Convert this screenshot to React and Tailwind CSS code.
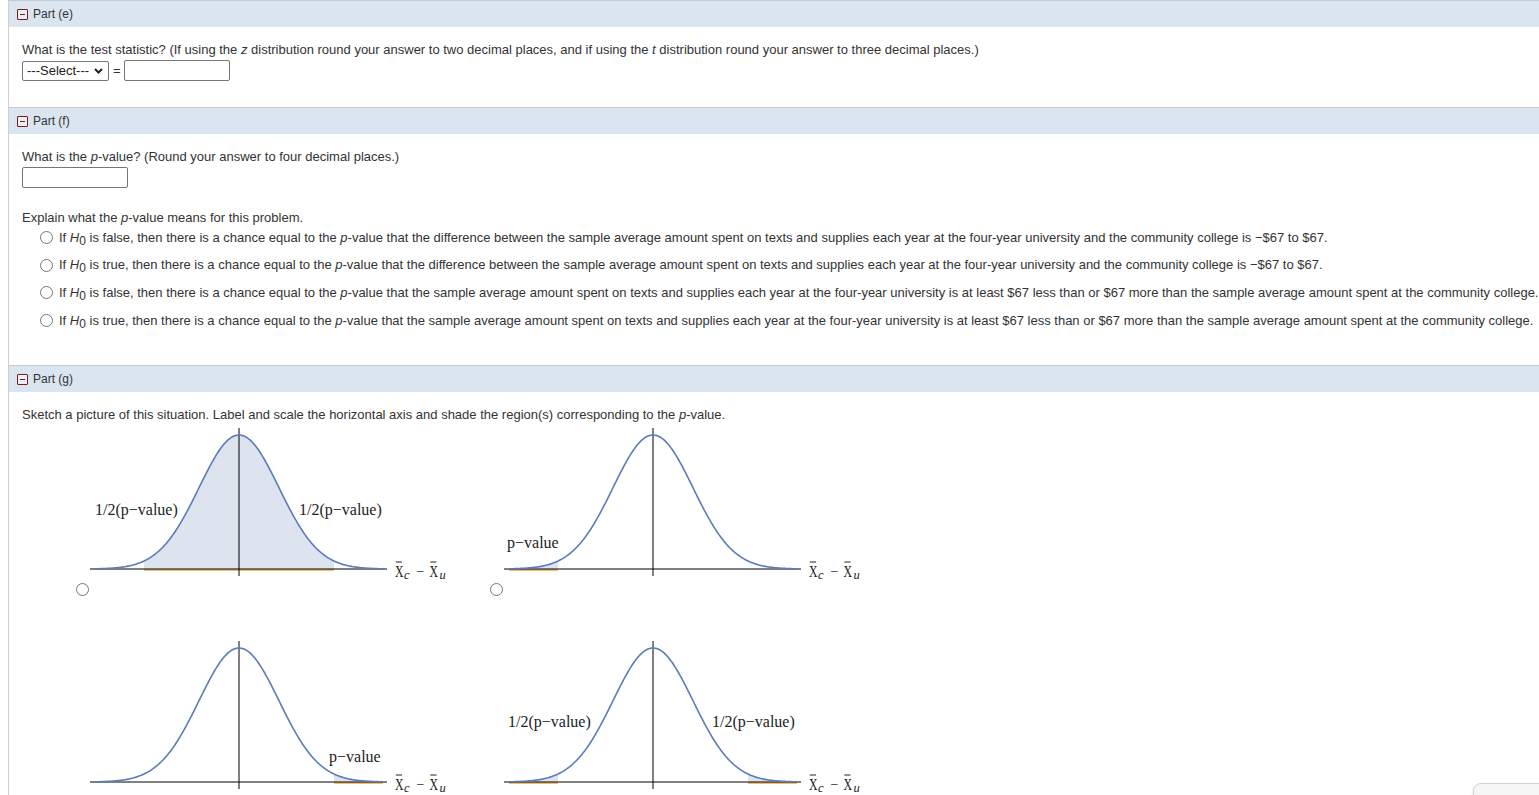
import React from 'react';

// normal curve geometry, svg-local coords
const AXIS_Y = 141;
const PEAK_H = 134;
const MID = 151;
const SIGMA = 40;
const yAt = (x) => AXIS_Y - PEAK_H * Math.exp(-(((x - MID) / SIGMA) ** 2) / 2);

const curvePts = (a, b) => {
    const pts = [];
    for (let x = a; x <= b; x += 1) pts.push(`${x} ${yAt(x).toFixed(2)}`);
    return pts;
};

const curveD = 'M ' + curvePts(7, 295).join(' L ');
const shadeD = ([a, b]) => `M ${a} ${AXIS_Y} L ${curvePts(a, b).join(' L ')} L ${b} ${AXIS_Y} Z`;

function Radio() {
    return <span className="block w-[13px] h-[13px] rounded-full border border-[#767676] bg-white" />;
}

function MinusBox() {
    return (
        <span className="w-[11px] h-[11px] border border-[#7b1c1c] rounded-[1px] flex items-center justify-center bg-white/40">
            <span className="block w-[5px] h-[1px] bg-[#7b1c1c]" />
        </span>
    );
}

function PartHeader({ label }) {
    return (
        <div className="h-[27px] border-t border-[#c6cbd0] bg-[#dae5ef] flex items-center pl-2 gap-[5px]">
            <MinusBox />
            <span className="text-[12px] text-[#333]">{label}</span>
        </div>
    );
}

// x-bar sub c minus x-bar sub u
function AxisLabel() {
    return (
        <g fontFamily="'Liberation Serif', 'Times New Roman', serif" fill="#222">
            <text x="307" y="148.7" fontSize="16" textLength="8.5" lengthAdjust="spacingAndGlyphs">X</text>
            <line x1="307.8" y1="134" x2="314" y2="134" stroke="#222" strokeWidth="1" />
            <text x="316" y="150.5" fontSize="12.5" fontStyle="italic">c</text>
            <text x="328.5" y="147.5" fontSize="14">−</text>
            <text x="341.5" y="148.7" fontSize="16" textLength="8.5" lengthAdjust="spacingAndGlyphs">X</text>
            <line x1="342.3" y1="134" x2="348.5" y2="134" stroke="#222" strokeWidth="1" />
            <text x="351.5" y="150.5" fontSize="12.5" fontStyle="italic">u</text>
        </g>
    );
}

function Graph({ shades, labels }) {
    return (
        <div className="flex flex-col items-start h-[213px]">
            <svg width="370" height="155" viewBox="0 0 370 155" className="ml-[12px] block">
                {shades.map((s, i) => (
                    <path key={i} d={shadeD(s)} fill="#dde4ef" />
                ))}
                {shades.map((s, i) => (
                    <line key={'o' + i} x1={s[0]} y1={AXIS_Y + 1} x2={s[1]} y2={AXIS_Y + 1} stroke="#eda93f" strokeWidth="1.5" />
                ))}
                <line x1="2" y1={AXIS_Y} x2="299" y2={AXIS_Y} stroke="#000" strokeWidth="1" />
                <line x1={MID} y1="0" x2={MID} y2="148" stroke="#000" strokeWidth="1" />
                <path d={curveD} fill="none" stroke="#5b7cb8" strokeWidth="1.6" />
                {labels.map((l, i) => (
                    <text key={i} x={l.x} y={l.y} fontSize="16" fill="#222" fontFamily="'Liberation Serif', 'Times New Roman', serif">
                        {l.text}
                    </text>
                ))}
                <AxisLabel />
            </svg>
            <Radio />
        </div>
    );
}

const H0 = () => (
    <>
        <i>H</i>
        <span className="relative top-[3px] text-[12px]">0</span>
    </>
);

const options = [
    ['is false', 'the difference between the sample average amount spent on texts and supplies each year at the four-year university and the community college is −$67 to $67.'],
    ['is true', 'the difference between the sample average amount spent on texts and supplies each year at the four-year university and the community college is −$67 to $67.'],
    ['is false', 'the sample average amount spent on texts and supplies each year at the four-year university is at least $67 less than or $67 more than the sample average amount spent at the community college.'],
    ['is true', 'the sample average amount spent on texts and supplies each year at the four-year university is at least $67 less than or $67 more than the sample average amount spent at the community college.'],
];

const graphs = [
    {
        shades: [[56, 246]],
        labels: [
            { x: 7, y: 87, text: '1/2(p−value)' },
            { x: 211, y: 87, text: '1/2(p−value)' },
        ],
    },
    { shades: [[7, 56]], labels: [{ x: 5, y: 120, text: 'p−value' }] },
    { shades: [[246, 295]], labels: [{ x: 241, y: 121, text: 'p−value' }] },
    {
        shades: [[7, 56], [246, 295]],
        labels: [
            { x: 6, y: 86, text: '1/2(p−value)' },
            { x: 210, y: 86, text: '1/2(p−value)' },
        ],
    },
];

export default function App() {
    return (
        <div className="relative min-h-screen bg-white pl-2 font-['Liberation_Sans',Arial,sans-serif] text-[13px] leading-[15px] text-[#333]">
            <div className="border-l border-[#cfcfcf] min-h-screen">
                {/* PART E */}
                <PartHeader label="Part (e)" />
                <div className="pl-[13px] pt-[15px] pb-[26px]">
                    <p className="h-[15px]">
                        What is the test statistic? (If using the <i>z</i> distribution round your answer to two decimal places, and if using the <i>t</i> distribution round your answer to three decimal places.)
                    </p>
                    <div className="mt-[3px] h-[21px] flex items-center">
                        <div className="w-[87px] h-[20px] border border-[#767676] rounded-[2px] flex items-center justify-between pl-[4px] pr-[5px] text-[13px] text-[#222]">
                            <span>---Select---</span>
                            <svg width="9" height="6" viewBox="0 0 9 6">
                                <polyline points="1,1 4.5,4.5 8,1" fill="none" stroke="#222" strokeWidth="2" />
                            </svg>
                        </div>
                        <span className="ml-[4px] mr-[3px]">=</span>
                        <div className="w-[106px] h-[21px] border border-[#767676] rounded-[2px] bg-white" />
                    </div>
                </div>

                {/* PART F */}
                <PartHeader label="Part (f)" />
                <div className="pl-[13px] pt-[15px] pb-[37px]">
                    <p className="h-[15px]">
                        What is the <i>p</i>-value? (Round your answer to four decimal places.)
                    </p>
                    <div className="mt-[3px] w-[106px] h-[21px] border border-[#767676] rounded-[2px]" />
                    <p className="mt-[22px] h-[15px]">
                        Explain what the <i>p</i>-value means for this problem.
                    </p>
                    <div className="mt-[5px] pl-[18px] flex flex-col gap-[12.7px]">
                        {options.map(([cond, rest], i) => (
                            <div key={i} className="h-[15px] flex items-center gap-[6px] whitespace-nowrap">
                                <Radio />
                                <span>
                                    If <H0 /> {cond}, then there is a chance equal to the <i>p</i>-value that {rest}
                                </span>
                            </div>
                        ))}
                    </div>
                </div>

                {/* PART G */}
                <PartHeader label="Part (g)" />
                <div className="pl-[13px] pt-[15px]">
                    <p className="h-[15px]">
                        Sketch a picture of this situation. Label and scale the horizontal axis and shade the region(s) corresponding to the <i>p</i>-value.
                    </p>
                    <div className="mt-[6px] ml-[54px] grid grid-cols-[414px_414px]">
                        {graphs.map((g, i) => (
                            <Graph key={i} shades={g.shades} labels={g.labels} />
                        ))}
                    </div>
                </div>
            </div>

            {/* floating widget peeking at bottom right */}
            <div className="absolute left-[1473px] top-[783px] w-[80px] h-[24px] rounded-tl-[8px] border border-[#d2d2d2] bg-[#f6f6f6] shadow-sm" />
        </div>
    );
}
